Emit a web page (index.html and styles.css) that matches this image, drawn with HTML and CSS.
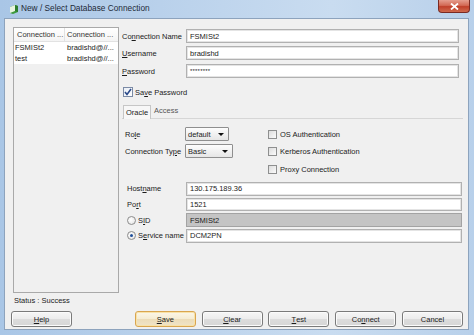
FILE: index.html
```html
<!DOCTYPE html>
<html>
<head>
<meta charset="utf-8">
<link rel="stylesheet" href="styles.css">
</head>
<body>
<div class="window">
  <div class="titlebar">
    <svg class="appicon" width="10" height="11" viewBox="0 0 10 11">
      <path d="M1 3 L6 1 L9 2 L9 8 L4 10 L1 9 Z" fill="#3c9a3c"/>
      <path d="M1 3 L6 1 L6 7 L1 9 Z" fill="#e8f4e0"/>
      <path d="M6 1 L9 2 L9 8 L6 7 Z" fill="#2d7d2d"/>
    </svg>
    <span class="title">New / Select Database Connection</span>
    <div class="close">
      <svg width="9" height="7" viewBox="0 0 9 7"><path d="M1 0.5 L8 6.5 M8 0.5 L1 6.5" stroke="#fff" stroke-width="1.8"/></svg>
    </div>
  </div>
  <div class="client">
    <div class="main">
      <div class="list">
        <div class="lrow lhead"><span class="c1">Connection ...</span><span class="c2">Connection ...</span></div>
        <div class="lrow"><span class="c1">FSMISt2</span><span class="c2">bradishd@//...</span></div>
        <div class="lrow"><span class="c1">test</span><span class="c2">bradishd@//...</span></div>
      </div>
      <div class="form">
        <div class="frow r1"><span class="flabel">Co<u>n</u>nection Name</span><div class="field">FSMISt2</div></div>
        <div class="frow r2"><span class="flabel"><u>U</u>sername</span><div class="field">bradishd</div></div>
        <div class="frow r3"><span class="flabel"><u>P</u>assword</span><div class="field pw">********</div></div>
        <div class="saverow"><span class="cb checked"><svg width="8" height="8" viewBox="0 0 8 8"><path d="M1 4 L3 6.5 L7 1" fill="none" stroke="#2b4a8a" stroke-width="1.6"/></svg></span><span>Sa<u>v</u>e Password</span></div>
        <div class="tabs"><span class="tab active">Oracle</span><span class="tab">Access</span></div>
        <div class="tabbody">
          <div class="opts">
            <div class="optleft">
              <div class="orow"><span class="olabel">Ro<u>l</u>e</span><div class="combo cw1"><span>default</span><i class="arrow"></i></div></div>
              <div class="orow"><span class="olabel">Connection Ty<u>p</u>e</span><div class="combo cw2"><span>Basic</span><i class="arrow"></i></div></div>
            </div>
            <div class="optright">
              <div class="crow"><span class="cb"></span><span>OS Authentication</span></div>
              <div class="crow"><span class="cb"></span><span>Kerberos Authentication</span></div>
              <div class="crow"><span class="cb"></span><span>Proxy Connection</span></div>
            </div>
          </div>
          <div class="conn">
            <div class="crow2"><span class="clabel">Host<u>n</u>ame</span><div class="field">130.175.189.36</div></div>
            <div class="crow2"><span class="clabel">Po<u>r</u>t</span><div class="field">1521</div></div>
            <div class="crow2 tall"><span class="clabel"><span class="radio"></span>S<u>I</u>D</span><div class="field disabled">FSMISt2</div></div>
            <div class="crow2"><span class="clabel"><span class="radio on"></span>S<u>e</u>rvice name</span><div class="field">DCM2PN</div></div>
          </div>
        </div>
      </div>
    </div>
    <div class="status">Status : Success</div>
    <div class="buttons">
      <div class="btn"><u>H</u>elp</div>
      <div class="btngroup">
        <div class="btn default"><u>S</u>ave</div>
        <div class="btn"><u>C</u>lear</div>
        <div class="btn"><u>T</u>est</div>
        <div class="btn">Co<u>n</u>nect</div>
        <div class="btn">Cancel</div>
      </div>
    </div>
  </div>
</div>
</body>
</html>
```

FILE: styles.css
```css
* { box-sizing: border-box; }
html, body { margin: 0; padding: 0; }
body {
  width: 474px;
  height: 335px;
  overflow: hidden;
  font-family: "Liberation Sans", Arial, sans-serif;
  font-size: 7.5px;
  color: #1b1b1b;
  background: #b3cde9;
}
u { text-decoration: underline; text-underline-offset: 1px; }
.window {
  width: 474px;
  height: 335px;
  display: flex;
  flex-direction: column;
  background: linear-gradient(90deg, #a9c6e6 0%, #bcd3ec 40%, #c9dcf0 70%, #b8d0ea 100%);
}
.titlebar {
  height: 18px;
  display: flex;
  align-items: flex-start;
  padding-left: 9px;
}
.appicon { margin-top: 4px; margin-right: 2px; }
.title {
  font-size: 8.3px;
  line-height: 17px;
  color: #1e2a38;
}
.close {
  margin-left: auto;
  margin-right: 4px;
  width: 32px;
  height: 13px;
  border: 1px solid #7a2a22;
  border-top: none;
  border-radius: 0 0 4px 4px;
  background: linear-gradient(#e59d8e 0%, #d36a55 45%, #c0402a 55%, #cf6a4e 100%);
  display: flex;
  align-items: center;
  justify-content: center;
}
.client {
  flex: 1;
  margin: 0 5px 5px 4px;
  background: #f0f0f0;
  border: 1px solid #8da3bd;
  display: flex;
  flex-direction: column;
}
.main {
  display: flex;
  padding: 8px 0 0 8px;
}
.list {
  width: 106px;
  height: 266px;
  border: 1px solid #a9a9a9;
  background: #f0f0f0;
}
.lrow {
  display: flex;
  background: #fff;
  height: 11px;
  line-height: 11px;
}
.lrow.lhead {
  height: 14px;
  line-height: 13px;
  border-bottom: 1px solid #e2e2e2;
  background: linear-gradient(#ffffff, #f4f4f4);
  color: #333;
}
.c1 { width: 51px; padding-left: 1px; white-space: nowrap; overflow: hidden; }
.c2 { flex: 1; padding-left: 2px; white-space: nowrap; overflow: hidden; }
.lhead .c1 { padding-left: 3px; border-right: 1px solid #e2e2e2; }
.form {
  margin-left: 3px;
  margin-top: 2px;
  width: 341px;
  display: flex;
  flex-direction: column;
}
.frow {
  display: flex;
  align-items: center;
  height: 14px;
}
.r2 { margin-top: 3px; }
.r3 { margin-top: 4px; }
.flabel { width: 64px; white-space: nowrap; }
.field {
  width: 273px;
  height: 14px;
  background: #fff;
  border: 1px solid #b1b1b1;
  box-shadow: inset 0 0 0 1px #e4e4e4;
  padding-left: 3px;
  display: flex;
  align-items: center;
  white-space: nowrap;
}
.field.pw { font-size: 6px; letter-spacing: 0.2px; }
.saverow {
  margin-top: 8px;
  height: 12px;
  display: flex;
  align-items: center;
  padding-left: 1px;
}
.cb {
  width: 10px;
  height: 10px;
  border: 1px solid #8e8f8f;
  background: linear-gradient(135deg, #dcdcdc, #fbfbfb);
  margin-right: 2px;
  display: inline-flex;
  align-items: center;
  justify-content: center;
  flex: none;
}
.cb.checked { background: linear-gradient(135deg, #e8eef6, #ffffff); border-color: #7b8aa5; }
.tabs {
  margin-top: 7px;
  height: 14px;
  display: flex;
  align-items: flex-end;
  border-bottom: 1px solid #d6d6d6;
  padding-left: 1px;
}
.tab {
  height: 13px;
  line-height: 12px;
  padding: 0 3px 0 3px;
  color: #555;
}
.tab.active {
  height: 14px;
  line-height: 13px;
  color: #1b1b1b;
  background: #f7f7f7;
  border: 1px solid #c6c6c6;
  border-bottom: none;
  margin-bottom: -1px;
  padding: 0 2px;
}
.tabbody { padding-top: 7px; }
.opts {
  height: 56px;
  display: flex;
}
.optleft {
  width: 146px;
  padding-left: 3px;
  padding-top: 1px;
}
.orow {
  display: flex;
  align-items: center;
  height: 14px;
  margin-bottom: 3px;
}
.olabel { width: 60px; white-space: nowrap; }
.combo {
  height: 14px;
  border: 1px solid #8f8f8f;
  background: linear-gradient(#fdfdfd, #e6e6e6);
  display: flex;
  align-items: center;
  padding-left: 2px;
  border-radius: 1px;
}
.combo span { flex: 1; }
.cw1 { width: 44px; }
.cw2 { width: 48px; }
.arrow {
  width: 0;
  height: 0;
  border-left: 3px solid transparent;
  border-right: 3px solid transparent;
  border-top: 3.5px solid #111;
  margin-right: 4px;
}
.optright { display: flex; flex-direction: column; }
.crow {
  height: 16px;
  margin-bottom: 1.5px;
  display: flex;
  align-items: center;
}
.crow .cb { width: 9px; height: 9px; margin-right: 3px; }
.conn { display: flex; flex-direction: column; }
.crow2 {
  display: flex;
  align-items: center;
  height: 13.5px;
  margin-bottom: 2px;
  padding-left: 5px;
}
.crow2 .field { width: 276px; height: 13.5px; }
.crow2.tall { height: 14px; }
.crow2.tall .field { height: 14px; }
.clabel { width: 59px; display: flex; align-items: center; white-space: nowrap; }
.field.disabled {
  background: #c4c4c4;
  border-color: #a3a3a3;
  box-shadow: none;
}
.radio {
  width: 9px;
  height: 9px;
  border-radius: 50%;
  border: 1px solid #8c8c8c;
  background: radial-gradient(circle at 40% 40%, #ffffff, #e0e0e0);
  margin-right: 2px;
  display: inline-flex;
  align-items: center;
  justify-content: center;
  flex: none;
}
.radio.on::after {
  content: "";
  width: 3px;
  height: 3px;
  border-radius: 50%;
  background: #1f4f9a;
}
.status {
  height: 13px;
  line-height: 13px;
  padding-left: 9px;
  margin-top: 1px;
}
.buttons {
  margin-top: 4px;
  display: flex;
  padding: 0 5px 0 6px;
  justify-content: space-between;
}
.btngroup { display: flex; gap: 5.8px; }
.btn {
  width: 61px;
  height: 16px;
  border: 1px solid #7a7a7a;
  border-radius: 3px;
  background: linear-gradient(#f6f6f6 0%, #ececec 48%, #dcdcdc 52%, #d6d6d6 100%);
  display: flex;
  align-items: center;
  justify-content: center;
  box-shadow: inset 0 0 0 1px #fbfbfb;
}
.btn.default {
  border-color: #d9a54f;
  background: linear-gradient(#fcf6e8 0%, #f5ecd4 48%, #ecdcb8 52%, #efe3c7 100%);
  box-shadow: inset 0 0 0 1px #f8e2a8;
}
```
